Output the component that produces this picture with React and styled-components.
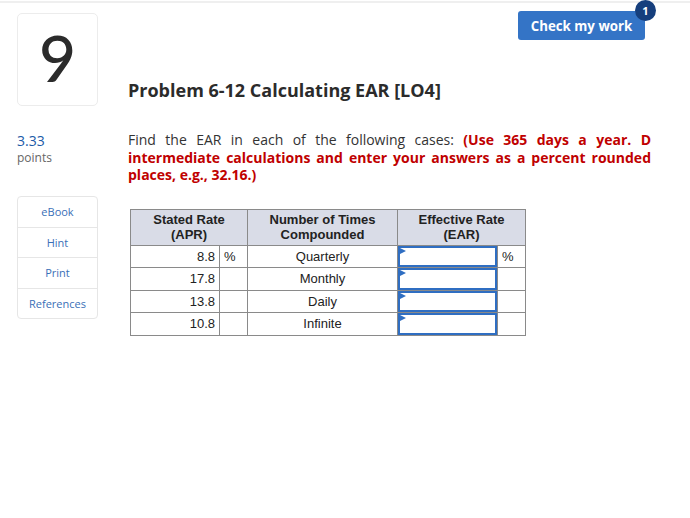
import React from 'react';
import styled, { createGlobalStyle } from 'styled-components';

const GlobalStyle = createGlobalStyle`
  html, body {
    margin: 0;
    padding: 0;
    background: #fff;
  }
  body {
    font-family: "Open Sans", Lato, sans-serif;
    color: #333;
  }
`;

const rows = [
  { rate: '8.8', times: 'Quarterly', unit: true },
  { rate: '17.8', times: 'Monthly' },
  { rate: '13.8', times: 'Daily' },
  { rate: '10.8', times: 'Infinite' },
];

const menu = ['eBook', 'Hint', 'Print', 'References'];

export default function App() {
  return (
    <>
      <GlobalStyle />
      <SPage>
        <SLeft>
          <SNumberBox>9</SNumberBox>
          <SPoints>
            <SScore>3.33</SScore>
            <SPointsLabel>points</SPointsLabel>
          </SPoints>
          <SMenu>
            {menu.map(item => (
              <SMenuItem key={item}>{item}</SMenuItem>
            ))}
          </SMenu>
        </SLeft>

        <SRight>
          <SToolbar>
            <SCheckButton>
              Check my work
              <SBadge>1</SBadge>
            </SCheckButton>
          </SToolbar>

          <STitle>Problem 6-12 Calculating EAR [LO4]</STitle>

          <SQuestion>
            <SLine $justify>
              Find the EAR in each of the following cases:{' '}
              <SRed>(Use 365 days a year. D</SRed>
            </SLine>
            <SLine $justify>
              <SRed>intermediate calculations and enter your answers as a percent rounded</SRed>
            </SLine>
            <SLine>
              <SRed>places, e.g., 32.16.)</SRed>
            </SLine>
          </SQuestion>

          <STable>
            <colgroup>
              <col style={{ width: 89 }} />
              <col style={{ width: 28 }} />
              <col style={{ width: 150 }} />
              <col style={{ width: 100 }} />
              <col style={{ width: 28 }} />
            </colgroup>
            <thead>
              <tr>
                <SHead colSpan={2}>
                  Stated Rate
                  <br />
                  (APR)
                </SHead>
                <SHead>
                  Number of Times
                  <br />
                  Compounded
                </SHead>
                <SHead colSpan={2}>
                  Effective Rate
                  <br />
                  (EAR)
                </SHead>
              </tr>
            </thead>
            <tbody>
              {rows.map(row => (
                <tr key={row.rate}>
                  <SCell $align="right">{row.rate}</SCell>
                  <SCell>{row.unit ? '%' : ''}</SCell>
                  <SCell $align="center">{row.times}</SCell>
                  <SInputCell>
                    <SInput>
                      <SFlag />
                    </SInput>
                  </SInputCell>
                  <SCell>{row.unit ? '%' : ''}</SCell>
                </tr>
              ))}
            </tbody>
          </STable>
        </SRight>
      </SPage>
    </>
  );
}

const SPage = styled.div`
  border-top: 2px solid #efefef;
  margin-top: 1px;
  display: flex;
  gap: 30px;
  padding: 10px 0 0 17px;
  width: 690px;
  box-sizing: border-box;
  height: 515px;
`;

const SLeft = styled.div`
  width: 81px;
  flex-shrink: 0;
  display: flex;
  flex-direction: column;
`;

const SNumberBox = styled.div`
  height: 93px;
  box-sizing: border-box;
  border: 1px solid #ececec;
  border-radius: 5px;
  display: flex;
  align-items: center;
  justify-content: center;
  font-family: Lato, sans-serif;
  font-size: 64px;
  font-weight: 500;
  color: #2b2b2b;
  padding-bottom: 4px;
`;

const SPoints = styled.div`
  margin-top: 26px;
`;

const SScore = styled.div`
  font-size: 14px;
  color: #1d5ba8;
  line-height: 18px;
`;

const SPointsLabel = styled.div`
  font-size: 12px;
  color: #666;
  line-height: 16px;
`;

const SMenu = styled.div`
  margin-top: 30px;
  border: 1px solid #e6e6e6;
  border-radius: 4px;
`;

const SMenuItem = styled.div`
  height: 29.5px;
  display: flex;
  align-items: center;
  justify-content: center;
  font-size: 11px;
  color: #3a6fb7;
  border-bottom: 1px solid #e6e6e6;

  &:last-child {
    border-bottom: 0;
  }
`;

const SRight = styled.div`
  flex: 1;
  display: flex;
  flex-direction: column;
`;

const SToolbar = styled.div`
  display: flex;
  justify-content: flex-end;
  padding-right: 45px;
  margin-top: -2px;
`;

const SCheckButton = styled.div`
  position: relative;
  width: 127px;
  height: 29px;
  background: #3474c6;
  border-radius: 3px;
  color: #fff;
  font-size: 13.3px;
  font-weight: 700;
  display: flex;
  align-items: center;
  justify-content: center;
`;

const SBadge = styled.span`
  position: absolute;
  top: -11px;
  right: -11px;
  width: 21px;
  height: 21px;
  border-radius: 50%;
  background: #163f7d;
  color: #fff;
  font-size: 11px;
  font-weight: 700;
  display: flex;
  align-items: center;
  justify-content: center;
`;

const STitle = styled.h2`
  margin: 39px 0 0;
  font-size: 18px;
  font-weight: 700;
  color: #2b2b2b;
  line-height: 22px;
`;

const SQuestion = styled.div`
  margin-top: 30px;
  width: 523px;
  font-size: 14px;
  line-height: 17.5px;
  color: #333;
`;

const SLine = styled.span`
  display: block;
  white-space: nowrap;
  text-align: ${props => (props.$justify ? 'justify' : 'left')};
  text-align-last: ${props => (props.$justify ? 'justify' : 'left')};
`;

const SRed = styled.span`
  color: #c00000;
  font-weight: 700;
`;

const STable = styled.table`
  margin-top: 25px;
  margin-left: 2px;
  width: 396px;
  table-layout: fixed;
  border-collapse: collapse;
  font-family: "Liberation Sans", Arial, sans-serif;
  font-size: 13px;
  color: #222;
`;

const SHead = styled.th`
  background: #d9dce7;
  border: 1px solid #8a8a8a;
  font-weight: 700;
  line-height: 15px;
  padding: 2px 4px 3px;
  height: 29px;
  vertical-align: middle;
`;

const SCell = styled.td`
  border: 1px solid #8a8a8a;
  height: 22.5px;
  padding: 0 4px;
  box-sizing: border-box;
  text-align: ${props => props.$align || 'left'};
`;

const SInputCell = styled.td`
  border: 1px solid #8a8a8a;
  padding: 0;
`;

const SInput = styled.div`
  position: relative;
  height: 21.5px;
  box-sizing: border-box;
  border: 2px solid #2f6ec2;
  background: #fff;
`;

const SFlag = styled.span`
  position: absolute;
  top: 0;
  left: 0;
  width: 0;
  height: 0;
  border-top: 3px solid transparent;
  border-bottom: 3px solid transparent;
  border-left: 6px solid #2f6ec2;
`;
